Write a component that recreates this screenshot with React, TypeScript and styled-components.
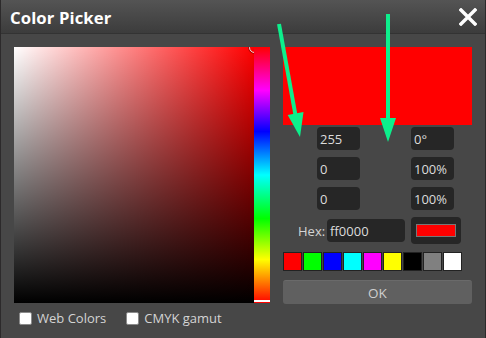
import React from "react";
import styled, { createGlobalStyle } from "styled-components";

const Global = createGlobalStyle`
  html, body { margin: 0; padding: 0; background: #2c2a2b; }
  body { font-family: "Open Sans", "Liberation Sans", sans-serif; }
  * { box-sizing: border-box; }
`;

const Dialog = styled.div`
  position: relative;
  width: 484px;
  height: 338px;
  margin-left: 1px;
  background: #474747;
  display: flex;
  flex-direction: column;
  overflow: hidden;
`;

const Header = styled.div`
  height: 34px;
  flex: none;
  display: flex;
  align-items: center;
  justify-content: space-between;
  padding: 1px 7px 0 9px;
  background: linear-gradient(to bottom, #545454, #3c3c3c);
  border-bottom: 1px solid #333;
`;

const Title = styled.div`
  color: #fff;
  font-weight: 700;
  font-size: 16.7px;
  letter-spacing: 0.1px;
`;

const Close = styled.button`
  border: none;
  background: none;
  padding: 0;
  width: 20px;
  height: 20px;
  display: flex;
  align-items: center;
  justify-content: center;
`;

const Body = styled.div`
  display: flex;
  gap: 13px;
  padding: 13px 0 0 13px;
`;

const LeftCol = styled.div`
  display: flex;
  flex-direction: column;
  gap: 6px;
`;

const PickerRow = styled.div`
  display: flex;
`;

const SVSquare = styled.div<{ $hue: string }>`
  position: relative;
  width: 240px;
  height: 256px;
  overflow: hidden;
  background: linear-gradient(to bottom, rgba(0,0,0,0), #000),
    linear-gradient(to right, #fff, ${(p) => p.$hue});
`;

const SVMarker = styled.div`
  position: absolute;
  right: -6px;
  top: -5px;
  width: 11px;
  height: 11px;
  border-radius: 50%;
  border: 1.5px solid #ddd;
  box-shadow: 0 0 0 1px rgba(0,0,0,0.3);
`;

const HueBar = styled.div`
  position: relative;
  width: 16px;
  height: 256px;
  background: linear-gradient(
    to bottom,
    #f00 0%,
    #f0f 17%,
    #00f 33%,
    #0ff 50%,
    #0f0 67%,
    #ff0 83%,
    #f00 100%
  );
`;

const HueMarker = styled.div`
  position: absolute;
  left: 0;
  right: 0;
  bottom: 1px;
  height: 2px;
  background: #fff;
`;

const Checks = styled.div`
  display: flex;
  gap: 20px;
  padding-left: 5px;
`;

const CheckLabel = styled.label`
  display: flex;
  align-items: center;
  gap: 5px;
  color: #d4d4d4;
  font-size: 13px;
`;

const Box = styled.span`
  width: 13px;
  height: 13px;
  background: #fff;
  border: 1px solid #8a8a8a;
  border-radius: 2px;
  display: inline-block;
`;

const RightCol = styled.div`
  width: 189px;
  display: flex;
  flex-direction: column;
`;

const Preview = styled.div<{ $c: string }>`
  height: 78px;
  background: ${(p) => p.$c};
`;

const Fields = styled.div`
  margin-top: 2px;
  display: grid;
  grid-template-columns: 43px 43px;
  column-gap: 51px;
  row-gap: 7px;
  padding-left: 34px;
`;

const Field = styled.div<{ $w?: number }>`
  height: 23px;
  width: ${(p) => p.$w ?? 43}px;
  background: #262626;
  border-radius: 4px;
  color: #dcdcdc;
  font-size: 13px;
  display: flex;
  align-items: center;
  padding-left: 3px;
`;

const HexRow = styled.div`
  margin-top: 7px;
  display: flex;
  align-items: center;
  padding-left: 15px;
`;

const HexLabel = styled.span`
  color: #d4d4d4;
  font-size: 13px;
  margin-right: 2px;
`;

const CurrentBox = styled.div`
  margin-left: 6px;
  width: 50px;
  height: 27px;
  background: #262626;
  border-radius: 4px;
  display: flex;
  align-items: center;
  justify-content: center;
`;

const CurrentSwatch = styled.div<{ $c: string }>`
  width: 40px;
  height: 13px;
  background: ${(p) => p.$c};
  border: 1px solid #777;
`;

const Swatches = styled.div`
  margin-top: 8px;
  display: flex;
  gap: 1px;
`;

const Swatch = styled.div<{ $c: string }>`
  width: 19px;
  height: 19px;
  background: ${(p) => p.$c};
  border: 1px solid #222;
`;

const OkButton = styled.button`
  margin-top: 9px;
  height: 24px;
  width: 189px;
  background: #606060;
  border: none;
  border-top: 1px solid #6a6a6a;
  border-radius: 3px;
  color: #cfcfcf;
  font-family: "Open Sans", "Liberation Sans", sans-serif;
  font-size: 13.5px;
  padding: 0;
`;

const Overlay = styled.svg`
  position: absolute;
  left: -1px;
  top: 0;
  pointer-events: none;
`;

const swatchColors = ["#ff0000", "#00ff00", "#0000ff", "#00ffff", "#ff00ff", "#ffff00", "#000000", "#808080", "#ffffff"];

export default function App() {
  return (
    <>
      <Global />
      <Dialog>
        <Header>
          <Title>Color Picker</Title>
          <Close aria-label="close">
            <svg width="18" height="18" viewBox="0 0 18 18">
              <path d="M2 2 L16 16 M16 2 L2 16" stroke="#fff" strokeWidth="3.4" strokeLinecap="square" />
            </svg>
          </Close>
        </Header>
        <Body>
          <LeftCol>
            <PickerRow>
              <SVSquare $hue="#ff0000">
                <SVMarker />
              </SVSquare>
              <HueBar>
                <HueMarker />
              </HueBar>
            </PickerRow>
            <Checks>
              <CheckLabel>
                <Box />
                Web Colors
              </CheckLabel>
              <CheckLabel>
                <Box />
                CMYK gamut
              </CheckLabel>
            </Checks>
          </LeftCol>
          <RightCol>
            <Preview $c="#ff0000" />
            <Fields>
              <Field>255</Field>
              <Field>0°</Field>
              <Field>0</Field>
              <Field>100%</Field>
              <Field>0</Field>
              <Field>100%</Field>
            </Fields>
            <HexRow>
              <HexLabel>Hex:</HexLabel>
              <Field $w={78}>ff0000</Field>
              <CurrentBox>
                <CurrentSwatch $c="#ff0000" />
              </CurrentBox>
            </HexRow>
            <Swatches>
              {swatchColors.map((c) => (
                <Swatch key={c} $c={c} />
              ))}
            </Swatches>
            <OkButton>OK</OkButton>
          </RightCol>
        </Body>
        <Overlay width="486" height="338" viewBox="0 0 486 338">
          <line x1="279" y1="24" x2="296" y2="118" stroke="#0def8c" strokeWidth="4" />
          <polygon points="300,137 287.7,114.9 303.5,111.9" fill="#0def8c" />
          <line x1="388" y1="14" x2="388" y2="122" stroke="#0def8c" strokeWidth="4" />
          <polygon points="388,142 380,118 396,118" fill="#0def8c" />
        </Overlay>
      </Dialog>
    </>
  );
}
